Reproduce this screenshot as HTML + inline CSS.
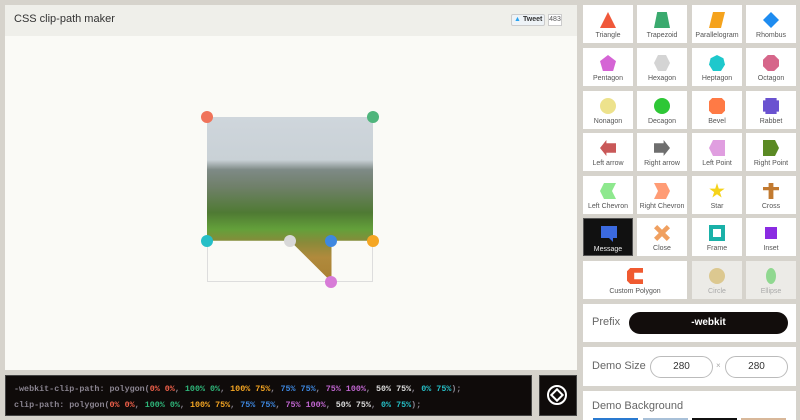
<!DOCTYPE html>
<html><head><style>
*{margin:0;padding:0;box-sizing:border-box}
body{width:800px;height:420px;background:#d6d3cc;font-family:"Liberation Sans",sans-serif;position:relative;overflow:hidden}
.a{position:absolute}
.card{position:absolute;width:50px;height:38px;background:#fff;text-align:center;font-size:7px;color:#555}
.card .ic{position:absolute;left:17px;top:7px;width:16px;height:16px}
.card span{position:absolute;left:0;right:0;top:27px}
.dot{position:absolute;width:12px;height:12px;border-radius:50%;margin:-6px 0 0 -6px}
.code{font-family:"Liberation Mono",monospace;font-size:8.4px;font-weight:bold;color:#8a8490;white-space:pre}
.pill{position:absolute;border:1px solid #bbb;border-radius:12px;height:22px;text-align:center;font-size:10px;line-height:20px;color:#333;background:#fff}
</style></head><body>
<div class="a" style="left:5px;top:5px;width:572px;height:31px;background:#efefea"></div>
<div class="a" style="left:14px;top:13px;font-size:11px;color:#333">CSS clip-path maker</div>
<div class="a" style="left:511px;top:14px;width:34px;height:12px;background:#eef3f7;border:1px solid #ccc;border-radius:2px;font-size:7px;font-weight:bold;color:#333;line-height:10px;padding-left:11px"><span style="position:absolute;left:2px;color:#2aa3ef">&#9650;</span>Tweet</div>
<div class="a" style="left:548px;top:14px;width:14px;height:12px;background:#fff;border:1px solid #ccc;font-size:7px;line-height:10px;text-align:center;color:#555">483</div>
<div class="a" style="left:5px;top:36px;width:572px;height:334px;background:#fafaf6"></div>
<div class="a" style="left:207px;top:117px;width:166px;height:165px;border:1px solid #ddd"></div>
<div class="a" style="left:207px;top:117px;width:166px;height:165px;clip-path:polygon(0% 0%,100% 0%,100% 75%,75% 75%,75% 100%,50% 75%,0% 75%);background:linear-gradient(180deg,#cfd6dc 0%,#c9d1d6 26%,#7e8a86 32%,#70806a 42%,#4f7a33 58%,#63a03a 68%,#8a8a3a 76%,#b08a3c 85%,#a98032 100%)"></div>
<div class="dot" style="left:207px;top:117px;background:#f0735a"></div>
<div class="dot" style="left:373px;top:117px;background:#4fb57c"></div>
<div class="dot" style="left:373px;top:241px;background:#f5a623"></div>
<div class="dot" style="left:331px;top:241px;background:#3e88e0"></div>
<div class="dot" style="left:331px;top:282px;background:#d77bd7"></div>
<div class="dot" style="left:290px;top:241px;background:#d8d8d8"></div>
<div class="dot" style="left:207px;top:241px;background:#26bfc7"></div>
<div class="a" style="left:5px;top:375px;width:527px;height:41px;background:#0f0b0a;border:1px solid #444"></div>
<div class="a code" style="left:14px;top:384px">-webkit-clip-path: polygon(<span style="color:#f0604a">0% 0%</span>, <span style="color:#2fb67a">100% 0%</span>, <span style="color:#f5a623">100% 75%</span>, <span style="color:#3e88e0">75% 75%</span>, <span style="color:#c066d0">75% 100%</span>, <span style="color:#ddd">50% 75%</span>, <span style="color:#26bfc7">0% 75%</span>);</div>
<div class="a code" style="left:14px;top:400px">clip-path: polygon(<span style="color:#f0604a">0% 0%</span>, <span style="color:#2fb67a">100% 0%</span>, <span style="color:#f5a623">100% 75%</span>, <span style="color:#3e88e0">75% 75%</span>, <span style="color:#c066d0">75% 100%</span>, <span style="color:#ddd">50% 75%</span>, <span style="color:#26bfc7">0% 75%</span>);</div>
<div class="a" style="left:539px;top:375px;width:38px;height:41px;background:#0f0b0a;border:1px solid #444"></div>
<div class="a" style="left:547px;top:385px;width:20px;height:20px;border:2px solid #fff;border-radius:50%"></div>
<div class="a" style="left:552px;top:390px;width:10px;height:10px;border:2px solid #fff;transform:rotate(45deg)"></div>

<div class="card" style="left:583px;top:5px"><div class="ic" style="background:#f0583a;clip-path:polygon(50% 0,100% 100%,0 100%)"></div><span>Triangle</span></div>
<div class="card" style="left:637px;top:5px"><div class="ic" style="background:#3aaa6e;clip-path:polygon(20% 0,80% 0,100% 100%,0 100%)"></div><span>Trapezoid</span></div>
<div class="card" style="left:692px;top:5px"><div class="ic" style="background:#f5a31d;clip-path:polygon(25% 0,100% 0,75% 100%,0 100%)"></div><span>Parallelogram</span></div>
<div class="card" style="left:746px;top:5px"><div class="ic" style="background:#1e8cf0;clip-path:polygon(50% 0,100% 50%,50% 100%,0 50%)"></div><span>Rhombus</span></div>

<div class="card" style="left:583px;top:48px"><div class="ic" style="background:#d564d5;clip-path:polygon(50% 0,100% 38%,82% 100%,18% 100%,0 38%)"></div><span>Pentagon</span></div>
<div class="card" style="left:637px;top:48px"><div class="ic" style="background:#d4d4d4;clip-path:polygon(25% 0,75% 0,100% 50%,75% 100%,25% 100%,0 50%)"></div><span>Hexagon</span></div>
<div class="card" style="left:692px;top:48px"><div class="ic" style="background:#1ec8cc;clip-path:polygon(50% 0,90% 20%,100% 60%,75% 100%,25% 100%,0 60%,10% 20%)"></div><span>Heptagon</span></div>
<div class="card" style="left:746px;top:48px"><div class="ic" style="background:#d6668a;clip-path:polygon(30% 0,70% 0,100% 30%,100% 70%,70% 100%,30% 100%,0 70%,0 30%)"></div><span>Octagon</span></div>

<div class="card" style="left:583px;top:91px"><div class="ic" style="background:#ede28c;border-radius:50%"></div><span>Nonagon</span></div>
<div class="card" style="left:637px;top:91px"><div class="ic" style="background:#2ec736;border-radius:50%"></div><span>Decagon</span></div>
<div class="card" style="left:692px;top:91px"><div class="ic" style="background:#ff7a45;clip-path:polygon(20% 0,80% 0,100% 20%,100% 80%,80% 100%,20% 100%,0 80%,0 20%)"></div><span>Bevel</span></div>
<div class="card" style="left:746px;top:91px"><div class="ic" style="background:#6a52d0;clip-path:polygon(0 15%,15% 15%,15% 0,85% 0,85% 15%,100% 15%,100% 85%,85% 85%,85% 100%,15% 100%,15% 85%,0 85%)"></div><span>Rabbet</span></div>

<div class="card" style="left:583px;top:133px"><div class="ic" style="background:#c95858;clip-path:polygon(40% 0,40% 20%,100% 20%,100% 80%,40% 80%,40% 100%,0 50%)"></div><span>Left arrow</span></div>
<div class="card" style="left:637px;top:133px"><div class="ic" style="background:#6e6e6e;clip-path:polygon(0 20%,60% 20%,60% 0,100% 50%,60% 100%,60% 80%,0 80%)"></div><span>Right arrow</span></div>
<div class="card" style="left:692px;top:133px"><div class="ic" style="background:#e09ee0;clip-path:polygon(25% 0,100% 0,100% 100%,25% 100%,0 50%)"></div><span>Left Point</span></div>
<div class="card" style="left:746px;top:133px"><div class="ic" style="background:#5b8a24;clip-path:polygon(0 0,75% 0,100% 50%,75% 100%,0 100%)"></div><span>Right Point</span></div>

<div class="card" style="left:583px;top:176px"><div class="ic" style="background:#8ee88e;clip-path:polygon(100% 0,75% 50%,100% 100%,25% 100%,0 50%,25% 0)"></div><span>Left Chevron</span></div>
<div class="card" style="left:637px;top:176px"><div class="ic" style="background:#ff9c75;clip-path:polygon(75% 0,100% 50%,75% 100%,0 100%,25% 50%,0 0)"></div><span>Right Chevron</span></div>
<div class="card" style="left:692px;top:176px"><div class="ic" style="background:#f5d31a;clip-path:polygon(50% 0,61% 35%,98% 35%,68% 57%,79% 91%,50% 70%,21% 91%,32% 57%,2% 35%,39% 35%)"></div><span>Star</span></div>
<div class="card" style="left:746px;top:176px"><div class="ic" style="background:#c27a30;clip-path:polygon(35% 0,65% 0,65% 25%,100% 25%,100% 45%,65% 45%,65% 100%,35% 100%,35% 45%,0 45%,0 25%,35% 25%)"></div><span>Cross</span></div>

<div class="card" style="left:583px;top:218px;background:#111;border:1px solid #555;color:#eee"><div class="ic" style="background:#3b6ae0;clip-path:polygon(0 0,100% 0,100% 75%,75% 75%,75% 100%,50% 75%,0 75%)"></div><span>Message</span></div>
<div class="card" style="left:637px;top:218px"><div class="ic" style="background:#f0a060;clip-path:polygon(20% 0,50% 30%,80% 0,100% 20%,70% 50%,100% 80%,80% 100%,50% 70%,20% 100%,0 80%,30% 50%,0 20%)"></div><span>Close</span></div>
<div class="card" style="left:692px;top:218px"><div class="ic" style="border:4px solid #1ab1a8;background:#fff"></div><span>Frame</span></div>
<div class="card" style="left:746px;top:218px"><div class="ic" style="background:#8a2be2;left:19px;top:9px;width:12px;height:12px"></div><span>Inset</span></div>

<div class="card" style="left:583px;top:261px;width:104px"><div class="ic" style="left:44px;background:#f05a30;clip-path:polygon(20% 0,100% 0,100% 30%,45% 30%,45% 70%,100% 70%,100% 100%,20% 100%,0 80%,0 20%)"></div><span>Custom Polygon</span></div>
<div class="card" style="left:692px;top:261px;background:#ecebe7;color:#aaa"><div class="ic" style="background:#dcc890;border-radius:50%"></div><span>Circle</span></div>
<div class="card" style="left:746px;top:261px;background:#ecebe7;color:#aaa"><div class="ic" style="left:20px;width:10px;background:#90d890;border-radius:50%"></div><span>Ellipse</span></div>

<div class="a" style="left:583px;top:304px;width:213px;height:38px;background:#fff"></div>
<div class="a" style="left:592px;top:316px;font-size:11px;color:#666">Prefix</div>
<div class="a" style="left:629px;top:312px;width:159px;height:22px;border-radius:11px;background:#120d0c;color:#fff;font-size:10px;font-weight:bold;text-align:center;line-height:22px">-webkit</div>
<div class="a" style="left:583px;top:347px;width:213px;height:39px;background:#fff"></div>
<div class="a" style="left:592px;top:360px;font-size:11px;color:#666">Demo Size</div>
<div class="pill" style="left:650px;top:356px;width:63px">280</div>
<div class="a" style="left:716px;top:361px;font-size:8px;color:#aaa">×</div>
<div class="pill" style="left:725px;top:356px;width:63px">280</div>
<div class="a" style="left:583px;top:391px;width:213px;height:29px;background:#fff"></div>
<div class="a" style="left:592px;top:400px;font-size:11px;color:#666">Demo Background</div>
<div class="a" style="left:593px;top:418px;width:45px;height:2px;background:#2a7ad0"></div>
<div class="a" style="left:643px;top:418px;width:45px;height:2px;background:#a8c0d8"></div>
<div class="a" style="left:692px;top:418px;width:45px;height:2px;background:#111"></div>
<div class="a" style="left:741px;top:418px;width:45px;height:2px;background:#d8b89a"></div>
</body></html>
